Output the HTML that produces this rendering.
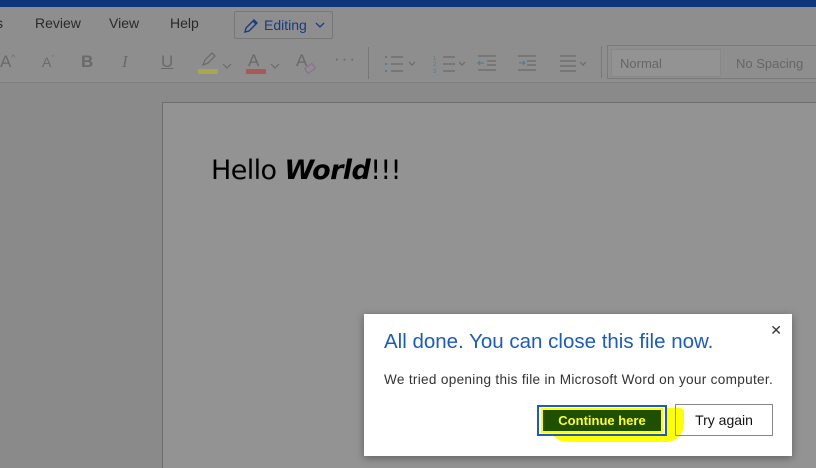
<!DOCTYPE html>
<html><head><meta charset="utf-8"><style>
html,body{margin:0;width:816px;height:468px;overflow:hidden}
body{position:relative;background:#8a8a8a;font-family:"Liberation Sans",sans-serif}
.top{position:absolute;left:0;top:0;width:816px;height:7px;background:#0e3678}
.tb{position:absolute;left:0;top:7px;width:816px;height:75px;background:#8e8e8e;border-bottom:1px solid #808080}
.t{position:absolute;font-size:14px;color:#2a2a2a}
.ic{position:absolute;font-size:17px;color:#6a6a6a}
.paper{position:absolute;left:162px;top:102px;width:700px;height:366px;background:#939393;border:1px solid #6e6e6e;border-bottom:none}
.dlg{position:absolute;left:364px;top:314px;width:428px;height:142px;background:#fff;box-shadow:0 2px 8px rgba(0,0,0,.35)}
</style></head><body>
<div class="top"></div>
<div class="tb">
<div class="t" style="left:-4px;top:8px">s</div>
<div class="t" style="left:35px;top:8px">Review</div>
<div class="t" style="left:109px;top:8px">View</div>
<div class="t" style="left:170px;top:8px">Help</div>
<div style="position:absolute;left:234px;top:4px;width:97px;height:26px;border:1px solid #777;border-radius:2px"></div>
<svg style="position:absolute;left:242px;top:10px" width="18" height="18" viewBox="0 0 18 18"><path d="M3 15 L4 11 L12 3 L15 6 L7 14 Z M11 4 L14 7" fill="none" stroke="#173c80" stroke-width="1.4"/></svg>
<div class="t" style="left:264px;top:10px;color:#173c80">Editing</div>
<svg style="position:absolute;left:315px;top:15px" width="10" height="6"><path d="M1 1 L5 5 L9 1" fill="none" stroke="#173c80" stroke-width="1.3"/></svg>
<div class="ic" style="left:0;top:45px">A<sup style="font-size:8px">^</sup></div>
<div class="ic" style="left:42px;top:47px;font-size:14px">A<sup style="font-size:8px">ˇ</sup></div>
<div class="ic" style="left:81px;top:45px;font-weight:bold">B</div>
<div class="ic" style="left:122px;top:45px;font-style:italic;font-family:'Liberation Serif'">I</div>
<div class="ic" style="left:161px;top:45px;text-decoration:underline">U</div>
<div style="position:absolute;left:198px;top:62px;width:20px;height:5px;background:#a8a64e"></div>
<svg style="position:absolute;left:200px;top:44px" width="18" height="16"><path d="M3 14 L5 9 L12 2 L15 5 L8 12 Z" fill="none" stroke="#6a6a6a" stroke-width="1.2"/></svg>
<svg style="position:absolute;left:222px;top:56px" width="10" height="6"><path d="M1 1 L5 5 L9 1" fill="none" stroke="#6a6a6a" stroke-width="1.2"/></svg>
<div class="ic" style="left:248px;top:44px">A</div>
<div style="position:absolute;left:246px;top:62px;width:20px;height:5px;background:#a85a5a"></div>
<svg style="position:absolute;left:270px;top:56px" width="10" height="6"><path d="M1 1 L5 5 L9 1" fill="none" stroke="#6a6a6a" stroke-width="1.2"/></svg>
<div class="ic" style="left:296px;top:44px">A</div>
<div style="position:absolute;left:305px;top:58px;width:8px;height:5px;border:1px solid #8e6a8e;transform:rotate(-35deg)"></div>
<div class="ic" style="left:334px;top:42px;letter-spacing:2px">···</div>
<div style="position:absolute;left:368px;top:40px;width:1px;height:32px;background:#777"></div>
<svg style="position:absolute;left:383px;top:46px" width="260" height="22"><g stroke="#6a6a6a" stroke-width="1.2" fill="none">
<path d="M8 4H20M8 11H20M8 18H20"/><path d="M26 9L29 12L32 9"/>
<path d="M60 4H72M60 11H72M60 18H72"/><path d="M76 9L79 12L82 9"/>
<path d="M95 3H113M104 8H113M104 12H113M95 17H113"/><path d="M101 10H95M97 8L95 10L97 12" stroke="#5a7a90"/>
<path d="M135 3H153M144 8H153M144 12H153M135 17H153"/><path d="M136 10H142M140 8L142 10L140 12" stroke="#5a7a90"/>
<path d="M177 3H193M177 8H193M177 13H193M177 18H193"/><path d="M197 9L200 12L203 9"/></g>
<g fill="#5a7a90"><rect x="2" y="3" width="2" height="2"/><rect x="2" y="10" width="2" height="2"/><rect x="2" y="17" width="2" height="2"/>
<text x="50" y="7" font-size="6">1</text><text x="50" y="13" font-size="6">2</text><text x="50" y="20" font-size="6">3</text></g></svg>
<div style="position:absolute;left:601px;top:39px;width:1px;height:32px;background:#777"></div>
<div style="position:absolute;left:607px;top:38px;width:215px;height:32px;border:1px solid #7a7a7a;background:#8e8e8e"></div>
<div style="position:absolute;left:611px;top:42px;width:108px;height:26px;background:#939393;border:1px solid #888"></div>
<div class="t" style="left:620px;top:49px;font-size:13px;color:#666">Normal</div>
<div class="t" style="left:736px;top:49px;font-size:13px;color:#666">No Spacing</div>
</div>
<div class="paper"></div>
<div style="position:absolute;left:211px;top:155px;font-size:27px;color:#000;font-family:'DejaVu Sans',sans-serif;letter-spacing:-0.6px">Hello <b><i>World</i></b>!!!</div>
<div class="dlg">
<div style="position:absolute;left:20px;top:16px;font-size:20.5px;color:#1a5cbf">All done. You can close this file now.</div>
<div style="position:absolute;right:10px;top:8px;font-size:14px;color:#333">✕</div>
<div style="position:absolute;left:20px;top:58px;font-size:13.6px;color:#333;letter-spacing:0.3px">We tried opening this file in Microsoft Word on your computer.</div>
<div style="position:absolute;left:184px;top:94px;width:136px;height:34px;background:#ffff00;border-radius:10px 4px 18px 20px"></div>
<div style="position:absolute;left:173px;top:91px;width:130px;height:31px;border:2px solid #1a5cbf;box-sizing:border-box;background:#fff"></div>
<div style="position:absolute;left:177px;top:94px;width:122px;height:25px;background:#ffff00"></div>
<div style="position:absolute;left:179px;top:96px;width:118px;height:21px;background:#1f4f00;color:#ffff2a;font-weight:bold;font-size:13px;text-align:center;line-height:21px">Continue here</div>
<div style="position:absolute;left:311px;top:90px;width:98px;height:32px;border:1px solid #888;box-sizing:border-box;font-size:14px;text-align:center;line-height:30px;color:#111">Try again</div>
</div>
</body></html>
